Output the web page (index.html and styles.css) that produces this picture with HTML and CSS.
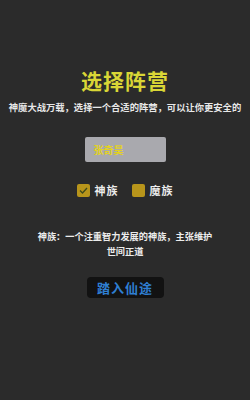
FILE: index.html
```html
<!DOCTYPE html>
<html lang="zh">
<head>
<meta charset="utf-8">
<link rel="stylesheet" href="styles.css">
</head>
<body>
<main class="page">
  <h1 class="title">选择阵营</h1>
  <p class="subtitle">神魔大战万载，选择一个合适的阵营，可以让你更安全的</p>
  <div class="input">张奇昊</div>
  <div class="choices">
    <label class="choice">
      <span class="box checked">
        <svg viewBox="0 0 13 13" width="13" height="13"><path d="M3 6.5 L5.5 9 L10 4" fill="none" stroke="#3d4a1c" stroke-width="1.3"/></svg>
      </span>
      <span class="label">神族</span>
    </label>
    <label class="choice">
      <span class="box"></span>
      <span class="label">魔族</span>
    </label>
  </div>
  <p class="desc">神族：一个注重智力发展的神族，主张维护世间正道</p>
  <button class="enter">踏入仙途</button>
</main>
</body>
</html>
```
FILE: styles.css
```css
html, body {
  margin: 0;
  padding: 0;
  background: #2b2b2b;
}
body {
  width: 250px;
  height: 400px;
  overflow: hidden;
  font-family: "Noto Sans CJK SC", "Noto Sans", sans-serif;
}
.page {
  display: flex;
  flex-direction: column;
  align-items: center;
  padding-top: 69px;
}
.title {
  margin: 0;
  font-size: 21px;
  line-height: 22px;
  font-weight: 700;
  color: #d9d636;
  letter-spacing: 1px;
}
.subtitle {
  margin: 10px 0 0;
  font-size: 9.3px;
  line-height: 12px;
  font-weight: 700;
  color: #e8e8e8;
  white-space: nowrap;
}
.input {
  margin-top: 24px;
  width: 72px;
  height: 25px;
  padding-left: 9px;
  box-sizing: content-box;
  background: #a9a9ae;
  border-radius: 2px;
  display: flex;
  align-items: center;
  font-size: 10px;
  font-weight: 700;
  color: #e3d21e;
}
.choices {
  margin-top: 22px;
  display: flex;
  gap: 13px;
  height: 13px;
  align-items: center;
}
.choice {
  display: flex;
  align-items: center;
  gap: 5px;
}
.box {
  width: 13px;
  height: 13px;
  background: #b8951b;
  border-radius: 2px;
  display: flex;
}
.label {
  font-size: 11px;
  line-height: 13px;
  font-weight: 700;
  color: #ececec;
  letter-spacing: 1px;
}
.desc {
  margin: 32px 0 0;
  width: 180px;
  text-align: center;
  font-size: 9.2px;
  line-height: 15px;
  font-weight: 700;
  color: #ececec;
}
.enter {
  margin-top: 18px;
  width: 77px;
  height: 21px;
  padding: 0;
  border: none;
  background: #121212;
  border-radius: 4px;
  font-family: inherit;
  font-size: 13px;
  font-weight: 700;
  color: #2f7fd2;
  letter-spacing: 1px;
}
```
